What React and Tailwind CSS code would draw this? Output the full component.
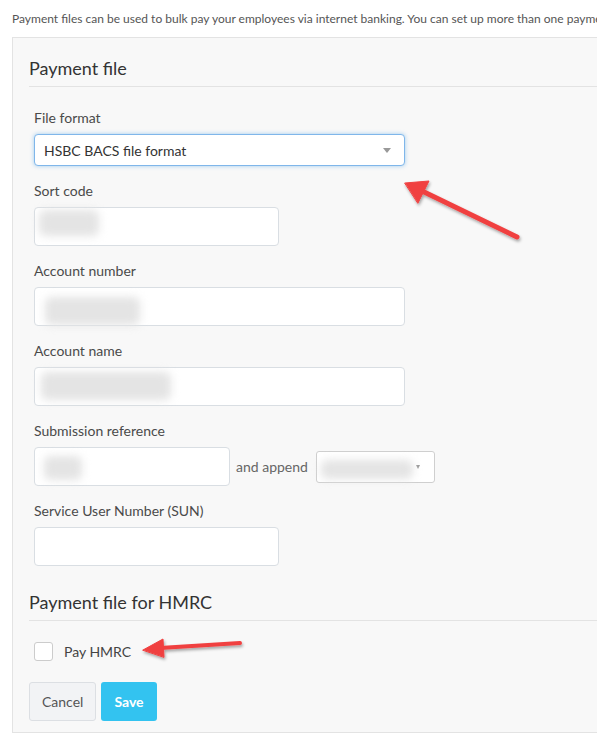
const Blur = ({ className }) => (
  <div
    className={"absolute pointer-events-none bg-[#e4e4e4] blur-[4px] rounded-md " + className}
  />
);

const Field = ({ label, children }) => (
  <div className="mb-[15px]">
    <div className="text-[14px] leading-[20px] text-[#4a4a4a] mb-[6px]">
      {label}
    </div>
    {children}
  </div>
);

const App = () => {
  return (
    <div
      className="relative bg-white w-[597px] h-[751px] overflow-hidden"
      style={{ fontFamily: "Lato, 'Liberation Sans', sans-serif" }}
    >
      <p className="pl-[12px] pt-[11px] text-[12px] leading-[16px] text-[#555] whitespace-nowrap">
        Payment files can be used to bulk pay your employees via internet banking. You can set up more than one payment file.
      </p>

      <div className="ml-[12px] mt-[10px] w-[620px] h-[696px] bg-[#f8f8f8] border border-[#e3e3e3] pl-[16px] pt-[18px]">
        <h2 className="text-[18px] leading-[24px] text-[#333] pb-[6px] border-b border-[#e3e3e3] mb-[21px]">
          Payment file
        </h2>

        <div className="pl-[5px]">
          <Field label="File format">
            <div className="w-[371px] h-[32px] bg-white border border-[#7fb6ea] rounded-[4px] shadow-[0_0_4px_rgba(102,175,233,0.6)] flex items-center justify-between pl-[9px] pr-[13px]">
              <span className="text-[14px] text-[#333]">HSBC BACS file format</span>
              <span className="w-0 h-0 border-l-[4px] border-r-[4px] border-t-[5px] border-l-transparent border-r-transparent border-t-[#999]" />
            </div>
          </Field>

          <Field label="Sort code">
            <div className="relative w-[245px] h-[39px] bg-white border border-[#d9dee3] rounded-[4px]">
              <Blur className="left-[4px] top-[2px] w-[60px] h-[26px]" />
            </div>
          </Field>

          <Field label="Account number">
            <div className="relative w-[371px] h-[39px] bg-white border border-[#d9dee3] rounded-[4px]">
              <Blur className="left-[10px] top-[9px] w-[95px] h-[28px]" />
            </div>
          </Field>

          <Field label="Account name">
            <div className="relative w-[371px] h-[39px] bg-white border border-[#d9dee3] rounded-[4px]">
              <Blur className="left-[6px] top-[4px] w-[130px] h-[28px]" />
            </div>
          </Field>

          <Field label="Submission reference">
            <div className="flex items-center">
              <div className="relative w-[196px] h-[39px] bg-white border border-[#d9dee3] rounded-[4px]">
                <Blur className="left-[9px] top-[8px] w-[38px] h-[24px]" />
              </div>
              <span className="ml-[6px] text-[14px] text-[#666]">and append</span>
              <div className="relative ml-[8px] w-[119px] h-[32px] bg-white border border-[#cfcfcf] rounded-[3px] flex items-center justify-end pr-[14px]">
                <Blur className="left-[4px] top-[8px] w-[92px] h-[19px]" />
                <span className="w-0 h-0 border-l-[2px] border-r-[2px] border-t-[4px] border-l-transparent border-r-transparent border-t-[#999]" />
              </div>
            </div>
          </Field>

          <Field label="Service User Number (SUN)">
            <div className="w-[245px] h-[39px] bg-white border border-[#d9dee3] rounded-[4px]" />
          </Field>
        </div>

        <h2 className="mt-[24px] text-[18px] leading-[24px] text-[#333] pb-[6px] border-b border-[#e3e3e3]">
          Payment file for HMRC
        </h2>

        <div className="pl-[5px] mt-[20px] flex items-center">
          <div className="w-[19px] h-[19px] bg-white border border-[#ccc] rounded-[3px]" />
          <span className="ml-[11px] text-[14px] text-[#444]">Pay HMRC</span>
        </div>

        <div className="mt-[20px] flex gap-[5px]">
          <button className="h-[39px] px-[12px] bg-[#f2f3f5] border border-[#dcdfe3] rounded-[3px] text-[14px] text-[#555]">
            Cancel
          </button>
          <button className="h-[39px] px-[13px] bg-[#33c3f0] rounded-[3px] text-[14px] font-bold text-white">
            Save
          </button>
        </div>
      </div>

      <svg className="absolute left-0 top-0 pointer-events-none" width="597" height="751">
        <defs>
          <filter id="sh" x="-20%" y="-20%" width="140%" height="140%">
            <feDropShadow dx="1" dy="2" stdDeviation="1.5" floodColor="#000" floodOpacity="0.35" />
          </filter>
        </defs>
        <g filter="url(#sh)" fill="#f04040" stroke="#f04040" strokeLinecap="round">
          <line x1="517" y1="237" x2="420" y2="190" strokeWidth="5" />
          <polygon points="405,183 429,181 418,203" strokeWidth="1" strokeLinejoin="round" />
          <line x1="240" y1="643" x2="160" y2="648" strokeWidth="4" />
          <polygon points="143,650 163,639 164,657" strokeWidth="1" strokeLinejoin="round" />
        </g>
      </svg>
    </div>
  );
};

export default App;
